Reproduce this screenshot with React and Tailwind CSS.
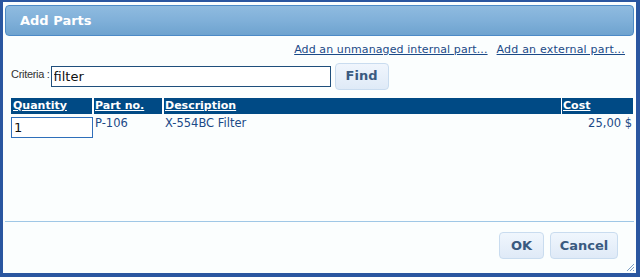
import React, { useState } from "react";

const AddPartsDialog = () => {
    const [criteria, setCriteria] = useState("filter");
    const [qty, setQty] = useState("1");

    return (
        <div className="w-[640px] h-[277px] flex flex-col bg-[#fbfefe] border-l-[3px] border-t-[2px] border-r-[4px] border-b-[4px] border-[#2a56a0] font-['DejaVu_Sans',sans-serif] overflow-hidden relative">
            {/* Title bar */}
            <div className="mx-[2px] mt-[3px] h-[31px] shrink-0 rounded-[4px] border border-[#4c8ac6] bg-gradient-to-b from-[#8fbbe0] via-[#80b0d9] to-[#6ea3cf] flex items-center pl-[14px]">
                <span className="text-white font-bold text-[13px]">Add Parts</span>
            </div>

            {/* Links */}
            <div className="flex justify-end gap-[9px] pr-[11px] mt-[6px] text-[11px] text-[#1b4a87]">
                <a href="#" className="underline tracking-[0.1px]">Add an unmanaged internal part...</a>
                <a href="#" className="underline tracking-[0.2px]">Add an external part...</a>
            </div>

            {/* Search */}
            <div className="flex items-center mt-[4px] pl-[8px]">
                <span className="shrink-0 whitespace-nowrap font-['Liberation_Sans',sans-serif] text-[11px] text-[#333] mr-[1px] -mt-[4px] tracking-[-0.3px]">Criteria :</span>
                <input
                    value={criteria}
                    onChange={(e) => setCriteria(e.target.value)}
                    className="w-[280px] h-[21px] shrink-0 border border-[#1f4f7c] bg-white px-[2px] text-[13px] text-[#111] outline-none"
                />
                <button className="ml-[4px] w-[54px] h-[27px] shrink-0 rounded-[4px] border border-[#c9dcef] bg-gradient-to-b from-[#f0f6fd] to-[#dfeaf7] text-[13px] font-bold text-[#3a5a80]">
                    Find
                </button>
            </div>

            {/* Table */}
            <div className="mt-[8px] ml-[8px] mr-[3px]">
                <div className="flex h-[16px] bg-[#004a85] text-white font-bold text-[11px] leading-[16px]">
                    <div className="w-[81px] pl-[2px] underline">Quantity</div>
                    <div className="w-[2px] bg-white"></div>
                    <div className="w-[68px] pl-[1px] underline">Part no.</div>
                    <div className="w-[2px] bg-white"></div>
                    <div className="w-[397px] pl-[1px] underline">Description</div>
                    <div className="w-[1px] bg-white"></div>
                    <div className="flex-1 pl-[1px] underline">Cost</div>
                </div>
                <div className="flex mt-[3px] text-[11.5px] leading-[13px] text-[#1b4a87]">
                    <div className="w-[83px]">
                        <input
                            value={qty}
                            onChange={(e) => setQty(e.target.value)}
                            className="w-[82px] h-[21px] border border-[#2f6fba] bg-white px-[2px] text-[13px] text-[#111] outline-none"
                        />
                    </div>
                    <div className="w-[70px] pl-[1px]">P-106</div>
                    <div className="w-[398px] pl-[1px]">X-554BC Filter</div>
                    <div className="flex-1 text-right pr-[1px]">25,00 $</div>
                </div>
            </div>

            <div className="flex-1"></div>

            {/* Footer */}
            <div className="mx-[2px] h-[1px] bg-[#9fc7e6]"></div>
            <div className="flex justify-end gap-[6px] pr-[18px] pt-[10px] pb-[14px]">
                <button className="w-[45px] h-[27px] rounded-[4px] border border-[#c9dcef] bg-gradient-to-b from-[#f0f6fd] to-[#dfeaf7] text-[13px] font-bold text-[#3a5a80]">
                    OK
                </button>
                <button className="w-[68px] h-[27px] rounded-[4px] border border-[#c9dcef] bg-gradient-to-b from-[#f0f6fd] to-[#dfeaf7] text-[13px] font-bold text-[#3a5a80]">
                    Cancel
                </button>
            </div>

            {/* Resize grip */}
            <svg className="absolute right-[1px] bottom-[1px]" width="10" height="10" viewBox="0 0 10 10">
                <path d="M9 2 L2 9 M9 5 L5 9 M9 8 L8 9" stroke="#7d9fc4" strokeWidth="1" />
            </svg>
        </div>
    );
};

export default function App() {
    return <AddPartsDialog />;
}
